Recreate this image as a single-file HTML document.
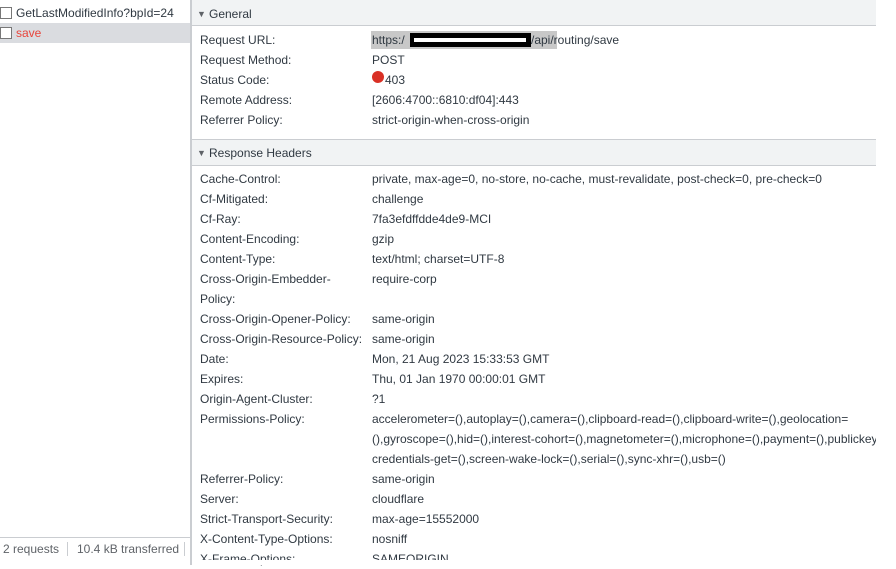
<!DOCTYPE html><html><head><style>
body{margin:0;width:896px;height:565px;background:#fff;font-family:"Liberation Sans",sans-serif;font-size:12px;color:#303942;position:relative;overflow:hidden}
.a{position:absolute;white-space:nowrap;line-height:20px}
.cb{position:absolute;width:10px;height:10px;border:1px solid #777;background:#fff}
.l{left:200px}.v{left:372px}
</style></head><body>
<div style="position:absolute;left:0;top:23px;width:190px;height:20px;background:#dadce0"></div>
<div class="cb" style="left:0;top:7px"></div><div class="a" style="left:16px;top:3px">GetLastModifiedInfo?bpId=24</div>
<div class="cb" style="left:0;top:27px"></div><div class="a" style="left:16px;top:23px;color:#e8453c">save</div>
<div style="position:absolute;left:0;top:537px;width:190px;height:1px;background:#cacdd1"></div>
<div class="a" style="left:3px;top:539px;color:#5f6368">2 requests</div>
<div style="position:absolute;left:67px;top:542px;width:1px;height:14px;background:#cacdd1"></div>
<div class="a" style="left:77px;top:539px;color:#5f6368">10.4 kB transferred</div>
<div style="position:absolute;left:184px;top:542px;width:1px;height:14px;background:#cacdd1"></div>
<div style="position:absolute;left:190px;top:0;width:2px;height:565px;background:#cacdd1"></div>
<div style="position:absolute;left:192px;top:0;width:684px;height:26px;background:#f1f3f4;border-bottom:1px solid #cacdd1;box-sizing:border-box"></div>
<div class="a" style="left:197px;top:4px;color:#5f6368;font-size:9px">▼</div><div class="a" style="left:209px;top:4px">General</div>
<div style="position:absolute;left:192px;top:139px;width:684px;height:27px;background:#f1f3f4;border-top:1px solid #cacdd1;border-bottom:1px solid #cacdd1;box-sizing:border-box"></div>
<div class="a" style="left:197px;top:143px;color:#5f6368;font-size:9px">▼</div><div class="a" style="left:209px;top:143px">Response Headers</div>
<div style="position:absolute;left:371px;top:31px;width:186px;height:18px;background:#c8c8c8"></div>
<div style="position:absolute;left:410px;top:33px;width:121px;height:14px;background:#000"></div>
<div style="position:absolute;left:414px;top:38px;width:112px;height:4px;background:#fff"></div>
<div class="a l" style="top:30px">Request URL:</div><div class="a v" style="top:30px">https:/</div><div class="a" style="left:531px;top:30px">/api/routing/save</div>
<div class="a l" style="top:50px">Request Method:</div><div class="a v" style="top:50px">POST</div>
<div class="a l" style="top:70px">Status Code:</div><div style="position:absolute;left:372px;top:71px;width:12px;height:12px;border-radius:50%;background:#d93025"></div><div class="a" style="left:385px;top:70px">403</div>
<div class="a l" style="top:90px">Remote Address:</div><div class="a v" style="top:90px">[2606:4700::6810:df04]:443</div>
<div class="a l" style="top:110px">Referrer Policy:</div><div class="a v" style="top:110px">strict-origin-when-cross-origin</div>
<div class="a l" style="top:169px">Cache-Control:</div><div class="a v" style="top:169px">private, max-age=0, no-store, no-cache, must-revalidate, post-check=0, pre-check=0</div>
<div class="a l" style="top:189px">Cf-Mitigated:</div><div class="a v" style="top:189px">challenge</div>
<div class="a l" style="top:209px">Cf-Ray:</div><div class="a v" style="top:209px">7fa3efdffdde4de9-MCI</div>
<div class="a l" style="top:229px">Content-Encoding:</div><div class="a v" style="top:229px">gzip</div>
<div class="a l" style="top:249px">Content-Type:</div><div class="a v" style="top:249px">text/html; charset=UTF-8</div>
<div class="a l" style="top:269px">Cross-Origin-Embedder-</div><div class="a v" style="top:269px">require-corp</div>
<div class="a l" style="top:289px">Policy:</div>
<div class="a l" style="top:309px">Cross-Origin-Opener-Policy:</div><div class="a v" style="top:309px">same-origin</div>
<div class="a l" style="top:329px">Cross-Origin-Resource-Policy:</div><div class="a v" style="top:329px">same-origin</div>
<div class="a l" style="top:349px">Date:</div><div class="a v" style="top:349px">Mon, 21 Aug 2023 15:33:53 GMT</div>
<div class="a l" style="top:369px">Expires:</div><div class="a v" style="top:369px">Thu, 01 Jan 1970 00:00:01 GMT</div>
<div class="a l" style="top:389px">Origin-Agent-Cluster:</div><div class="a v" style="top:389px">?1</div>
<div class="a l" style="top:409px">Permissions-Policy:</div>
<div style="position:absolute;left:372px;top:409px;width:504px;overflow:hidden">
<div style="line-height:20px;white-space:nowrap">accelerometer=(),autoplay=(),camera=(),clipboard-read=(),clipboard-write=(),geolocation=</div>
<div style="line-height:20px;white-space:nowrap">(),gyroscope=(),hid=(),interest-cohort=(),magnetometer=(),microphone=(),payment=(),publickey-</div>
<div style="line-height:20px;white-space:nowrap">credentials-get=(),screen-wake-lock=(),serial=(),sync-xhr=(),usb=()</div></div>
<div class="a l" style="top:469px">Referrer-Policy:</div><div class="a v" style="top:469px">same-origin</div>
<div class="a l" style="top:489px">Server:</div><div class="a v" style="top:489px">cloudflare</div>
<div class="a l" style="top:509px">Strict-Transport-Security:</div><div class="a v" style="top:509px">max-age=15552000</div>
<div class="a l" style="top:529px">X-Content-Type-Options:</div><div class="a v" style="top:529px">nosniff</div>
<div class="a l" style="top:549px">X-Frame-Options:</div><div class="a v" style="top:549px">SAMEORIGIN</div>
<div style="position:absolute;left:192px;top:560px;width:704px;height:5px;background:#fff"></div>
<div style="position:absolute;left:0;top:560px;width:190px;height:5px;background:#fff"></div>
</body></html>
